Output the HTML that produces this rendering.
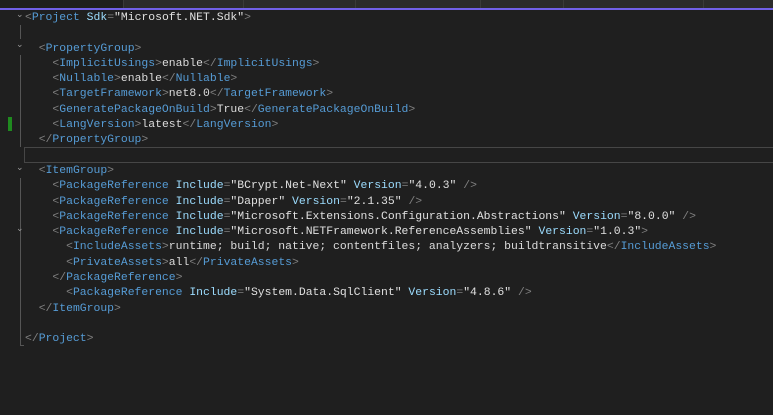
<!DOCTYPE html>
<html><head><style>
body{margin:0;width:773px;height:415px;background:#1f1f1f;overflow:hidden;position:relative;font-family:"Liberation Mono",monospace;}
.tabs{position:absolute;left:0;top:0;width:773px;height:8px;background:#2b2b2b;}
.tab{position:absolute;top:0;height:8px;border-right:1px solid #3a3a3a;}
.purple{position:absolute;left:0;top:8px;width:773px;height:2px;background:#7160e8;}
pre{position:absolute;left:25px;top:10px;margin:0;font-size:11.42px;line-height:15.3px;color:#dcdcdc;}
.b{color:#808080}.t{color:#569cd6}.a{color:#9cdcfe}.v{color:#e0e0e0}
.g{position:absolute;width:1px;background:#555;}
.f{position:absolute;left:16px;color:#999;font-size:9px;font-family:"DejaVu Sans",sans-serif;}
.cur{position:absolute;left:24px;top:147px;width:760px;height:14px;border:1px solid #464646;}
</style></head><body>
<div class="tabs">
<div class="tab" style="left:0;width:123px;background:#1f1f1f"></div>
<div class="tab" style="left:124px;width:119px"></div>
<div class="tab" style="left:244px;width:111px"></div>
<div class="tab" style="left:356px;width:124px"></div>
<div class="tab" style="left:481px;width:82px"></div>
<div class="tab" style="left:564px;width:139px"></div>
</div>
<div class="purple"></div>
<div class="cur"></div>
<div class="g" style="left:20px;top:25px;height:14px"></div>
<div class="g" style="left:20px;top:55px;height:92px"></div>
<div class="g" style="left:20px;top:178px;height:168px"></div>
<div class="g" style="left:20px;top:345px;width:4px;height:1px"></div>
<div style="position:absolute;left:8px;top:117px;width:4px;height:14px;background:#1f8a1f"></div>
<div class="f" style="top:10px">⌄</div>
<div class="f" style="top:40px">⌄</div>
<div class="f" style="top:163px">⌄</div>
<div class="f" style="top:224px">⌄</div>
<pre><span class="b">&lt;</span><span class="t">Project</span> <span class="a">Sdk</span><span class="b">=</span><span class="v">"Microsoft.NET.Sdk"</span><span class="b">&gt;</span>

  <span class="b">&lt;</span><span class="t">PropertyGroup</span><span class="b">&gt;</span>
    <span class="b">&lt;</span><span class="t">ImplicitUsings</span><span class="b">&gt;</span>enable<span class="b">&lt;/</span><span class="t">ImplicitUsings</span><span class="b">&gt;</span>
    <span class="b">&lt;</span><span class="t">Nullable</span><span class="b">&gt;</span>enable<span class="b">&lt;/</span><span class="t">Nullable</span><span class="b">&gt;</span>
    <span class="b">&lt;</span><span class="t">TargetFramework</span><span class="b">&gt;</span>net8.0<span class="b">&lt;/</span><span class="t">TargetFramework</span><span class="b">&gt;</span>
    <span class="b">&lt;</span><span class="t">GeneratePackageOnBuild</span><span class="b">&gt;</span>True<span class="b">&lt;/</span><span class="t">GeneratePackageOnBuild</span><span class="b">&gt;</span>
    <span class="b">&lt;</span><span class="t">LangVersion</span><span class="b">&gt;</span>latest<span class="b">&lt;/</span><span class="t">LangVersion</span><span class="b">&gt;</span>
  <span class="b">&lt;/</span><span class="t">PropertyGroup</span><span class="b">&gt;</span>

  <span class="b">&lt;</span><span class="t">ItemGroup</span><span class="b">&gt;</span>
    <span class="b">&lt;</span><span class="t">PackageReference</span> <span class="a">Include</span><span class="b">=</span><span class="v">"BCrypt.Net-Next"</span> <span class="a">Version</span><span class="b">=</span><span class="v">"4.0.3"</span> <span class="b">/&gt;</span>
    <span class="b">&lt;</span><span class="t">PackageReference</span> <span class="a">Include</span><span class="b">=</span><span class="v">"Dapper"</span> <span class="a">Version</span><span class="b">=</span><span class="v">"2.1.35"</span> <span class="b">/&gt;</span>
    <span class="b">&lt;</span><span class="t">PackageReference</span> <span class="a">Include</span><span class="b">=</span><span class="v">"Microsoft.Extensions.Configuration.Abstractions"</span> <span class="a">Version</span><span class="b">=</span><span class="v">"8.0.0"</span> <span class="b">/&gt;</span>
    <span class="b">&lt;</span><span class="t">PackageReference</span> <span class="a">Include</span><span class="b">=</span><span class="v">"Microsoft.NETFramework.ReferenceAssemblies"</span> <span class="a">Version</span><span class="b">=</span><span class="v">"1.0.3"</span><span class="b">&gt;</span>
      <span class="b">&lt;</span><span class="t">IncludeAssets</span><span class="b">&gt;</span>runtime; build; native; contentfiles; analyzers; buildtransitive<span class="b">&lt;/</span><span class="t">IncludeAssets</span><span class="b">&gt;</span>
      <span class="b">&lt;</span><span class="t">PrivateAssets</span><span class="b">&gt;</span>all<span class="b">&lt;/</span><span class="t">PrivateAssets</span><span class="b">&gt;</span>
    <span class="b">&lt;/</span><span class="t">PackageReference</span><span class="b">&gt;</span>
      <span class="b">&lt;</span><span class="t">PackageReference</span> <span class="a">Include</span><span class="b">=</span><span class="v">"System.Data.SqlClient"</span> <span class="a">Version</span><span class="b">=</span><span class="v">"4.8.6"</span> <span class="b">/&gt;</span>
  <span class="b">&lt;/</span><span class="t">ItemGroup</span><span class="b">&gt;</span>

<span class="b">&lt;/</span><span class="t">Project</span><span class="b">&gt;</span></pre>
</body></html>
